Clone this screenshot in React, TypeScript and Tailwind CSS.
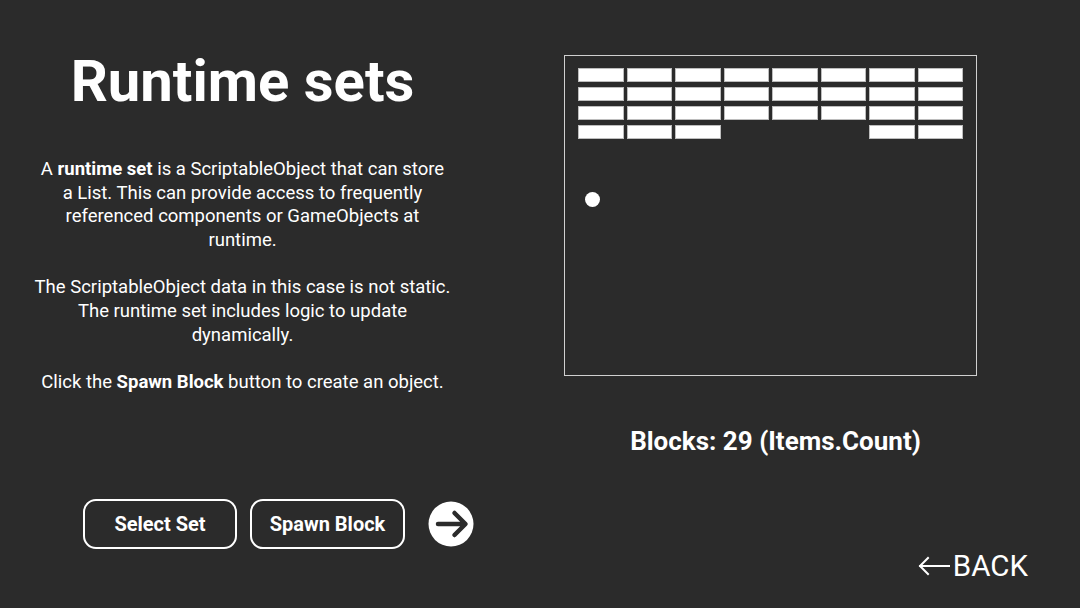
const rows = [
  [1, 1, 1, 1, 1, 1, 1, 1],
  [1, 1, 1, 1, 1, 1, 1, 1],
  [1, 1, 1, 1, 1, 1, 1, 1],
  [1, 1, 1, 0, 0, 0, 1, 1],
];

function ArrowCircle() {
  return (
    <svg width="46" height="46" viewBox="0 0 46 46">
      <circle cx="23" cy="23" r="22.5" fill="#ffffff" />
      <path
        d="M10 23H37M26.5 12L37.5 23L26.5 34"
        fill="none"
        stroke="#2b2b2b"
        strokeWidth="4.5"
        strokeLinecap="round"
        strokeLinejoin="round"
      />
    </svg>
  );
}

function BackArrow() {
  return (
    <svg width="32" height="20" viewBox="0 0 32 20">
      <path
        d="M2 10H31M10 2L2 10L10 18"
        fill="none"
        stroke="#ffffff"
        strokeWidth="2"
        strokeLinecap="square"
      />
    </svg>
  );
}

export default function App() {
  return (
    <div
      className="w-[1080px] h-[608px] bg-[#2b2b2b] text-white flex overflow-hidden"
      style={{ fontFamily: "Roboto, 'Liberation Sans', sans-serif" }}
    >
      {/* left column */}
      <div className="w-[485px] flex flex-col items-center pt-[51px]">
        <h1 className="text-[58px] font-bold leading-[60px]">Runtime sets</h1>

        <div className="mt-[47px] w-[440px] text-center text-[18.5px] leading-[23.7px] flex flex-col gap-[23.3px]">
          <p>
            A <b>runtime set</b> is a ScriptableObject that can store
            <br />a List. This can provide access to frequently
            <br />referenced components or GameObjects at
            <br />runtime.
          </p>
          <p>
            The ScriptableObject data in this case is not static.
            <br />The runtime set includes logic to update
            <br />dynamically.
          </p>
          <p>
            Click the <b>Spawn Block</b> button to create an object.
          </p>
        </div>

        <div className="mt-auto mb-[59px] flex items-center gap-[13px] pl-[72px]">
          <button className="w-[154px] h-[50px] rounded-[13px] border-2 border-white text-[20px] font-bold">
            Select Set
          </button>
          <button className="w-[155px] h-[50px] rounded-[13px] border-2 border-white text-[20px] font-bold">
            Spawn Block
          </button>
          <div className="ml-[10px]">
            <ArrowCircle />
          </div>
        </div>
      </div>

      {/* right column */}
      <div className="flex-1 flex flex-col pl-[79px] pt-[55px]">
        <div className="w-[413px] h-[321px] border border-[#d0d0d0] px-[13px] pt-[12px] flex flex-col">
          <div className="grid grid-cols-8 gap-x-[3px] gap-y-[5px]">
            {rows.flat().map((on, i) =>
              on ? (
                <div key={i} className="h-[14px] bg-white border border-[#bdbdbd]" />
              ) : (
                <div key={i} className="h-[14px]" />
              )
            )}
          </div>
          <div className="mt-[53px] ml-[7px] w-[15px] h-[15px] rounded-full bg-white" />
        </div>

        <div className="w-[413px] mt-[49px] text-center text-[26px] font-bold leading-[32px] pl-[10px]">
          Blocks: 29 (Items.Count)
        </div>

        <div className="mt-auto mb-[25px] self-end mr-[52px] flex items-center gap-[3px] text-[29.5px] leading-[34px]">
          <BackArrow />
          <span>BACK</span>
        </div>
      </div>
    </div>
  );
}
